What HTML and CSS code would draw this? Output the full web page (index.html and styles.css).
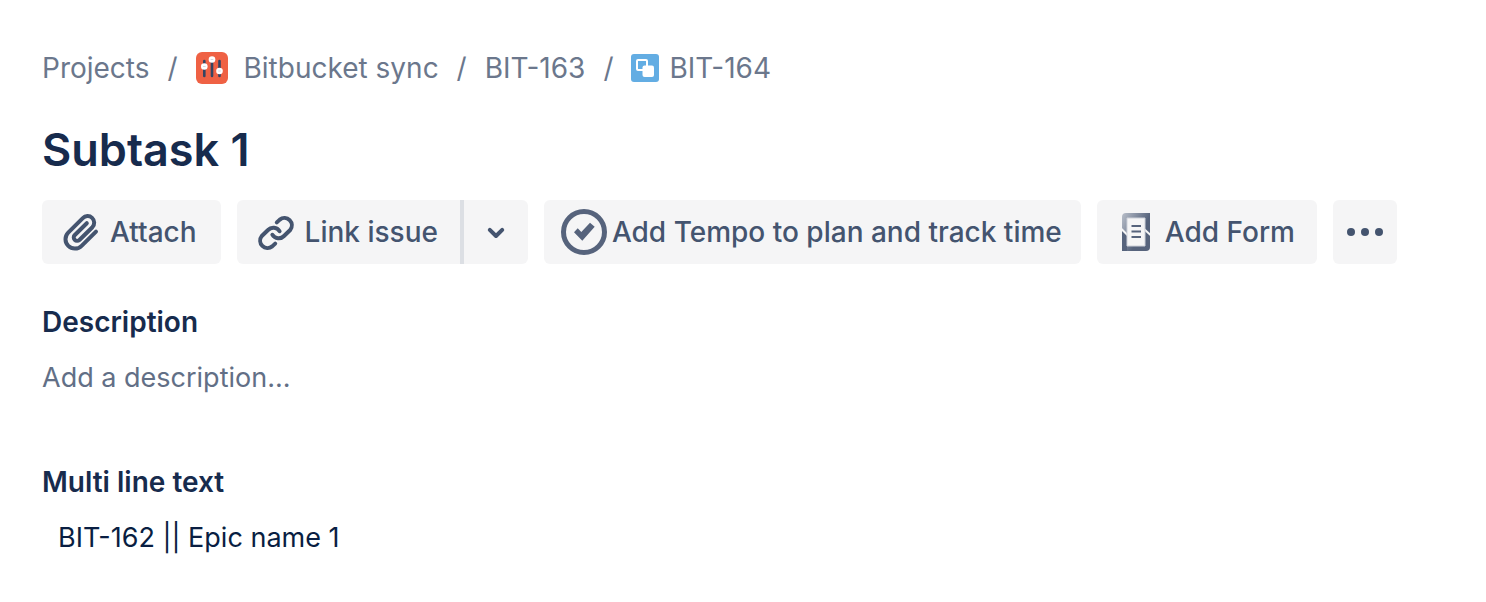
FILE: index.html
```html
<!DOCTYPE html>
<html lang="en">
<head>
<meta charset="utf-8">
<meta name="viewport" content="width=device-width, initial-scale=1">
<title>BIT-164 Subtask 1</title>
<link rel="stylesheet" href="styles.css">
</head>
<body>
<main class="issue">
  <nav aria-label="Breadcrumbs">
    <ol class="crumbs">
      <li class="crumb"><a href="#">Projects</a></li>
      <li class="crumb"><a class="crumb-project" href="#">
        <svg width="32" height="32" viewBox="0 0 32 32" aria-hidden="true">
          <rect width="32" height="32" rx="6" fill="#ef6144"/>
          <g stroke="#344563" stroke-width="2.600" stroke-linecap="round"><path d="M8.300 9v15M16 8v16M23.500 9v15"/></g>
          <g fill="#fff"><circle cx="8.300" cy="14.500" r="3.300"/><circle cx="16" cy="7.500" r="3.300"/><circle cx="23.500" cy="19" r="3.300"/></g>
          <path d="M7 14.500h2.600M14.700 7.500h2.600M22.200 19h2.600" stroke="#d5d9e0"/>
        </svg>
        Bitbucket sync</a></li>
      <li class="crumb"><a href="#">BIT-163</a></li>
      <li class="crumb"><a class="crumb-issue" href="#">
        <svg width="28" height="28" viewBox="0 0 28 28" aria-hidden="true">
          <rect width="28" height="28" rx="3" fill="#63ade3"/>
          <rect x="6" y="6" width="10" height="10" rx="1" fill="none" stroke="#fff" stroke-width="2"/>
          <rect x="11.500" y="11.500" width="11.500" height="11.500" rx="2" fill="#fff"/>
        </svg>
        BIT-164</a></li>
    </ol>
  </nav>

  <h1 class="title">Subtask 1</h1>

  <div class="toolbar">
    <button class="btn" type="button">
      <svg class="icon line" viewBox="0 0 24 24" aria-hidden="true"><path d="M19.500 11.800L12.300 18.900A4.700 4.700 0 0 1 5.600 12.300L12.900 5.100A3.200 3.200 0 0 1 17.700 9.600L11.200 16A1.700 1.700 0 0 1 8.800 13.600L14.900 7.600"/></svg>
      Attach
    </button>
    <div class="split">
      <button class="btn split-main" type="button">
        <svg class="icon line" viewBox="0 0 24 24" aria-hidden="true"><path d="M12.400 7.200L13.900 5.800A3.700 3.700 0 0 1 19.100 11L16 14A3.700 3.700 0 0 1 10.200 13.400M11.600 17.800L10.100 19.200A3.700 3.700 0 0 1 4.900 14L8 11A3.700 3.700 0 0 1 13.800 11.600"/></svg>
        Link issue
      </button>
      <button class="btn square" type="button" aria-label="More link options">
        <svg class="icon line" viewBox="0 0 24 24" aria-hidden="true"><path d="M8.900 10.900L12 14L15.100 10.900"/></svg>
      </button>
    </div>
    <button class="btn tempo" type="button">
      <svg class="icon" viewBox="0 0 48 48" aria-hidden="true"><circle cx="24" cy="24" r="20.500" fill="none" stroke="#56637c" stroke-width="5"/><path d="M14 24.300L17.700 20.300L21.300 24L30 14.700L34.700 18.700L22.300 32.700Z" fill="#56637c"/></svg>
      Add Tempo to plan and track time
    </button>
    <button class="btn form" type="button">
      <svg class="icon" viewBox="0 0 48 48" aria-hidden="true">
        <defs><linearGradient id="fade" x1="0" y1="0" x2="0.700" y2="0.500"><stop offset="0" stop-color="#b9bfca"/><stop offset="1" stop-color="#56637c"/></linearGradient></defs>
        <path d="M14 5H38V39Q38 43 34 43H10V9Q10 5 14 5Z" fill="url(#fade)"/>
        <path d="M10 23L15 28V43H10Z" fill="#56637c"/>
        <path d="M9.500 21L15.500 27M32 21L38.500 27" stroke="#f5f5f6" stroke-width="2"/>
        <path d="M15 10H33V38H15Z" fill="#f5f5f6" stroke="#cdd1d9"/>
        <path d="M19.500 18H29M19.500 23.500H29M19.500 29H29" stroke="#56637c" stroke-width="2"/>
      </svg>
      Add Form
    </button>
    <button class="btn square" type="button" aria-label="More actions">
      <svg class="icon" viewBox="0 0 48 48" aria-hidden="true"><g fill="#44546f"><circle cx="10" cy="24" r="4"/><circle cx="24" cy="24" r="4"/><circle cx="38" cy="24" r="4"/></g></svg>
    </button>
  </div>

  <section class="field">
    <h2 class="label">Description</h2>
    <p class="value placeholder">Add a description...</p>
  </section>
  <section class="field">
    <h2 class="label">Multi line text</h2>
    <p class="value inset">BIT-162 || Epic name 1</p>
  </section>
</main>
</body>
</html>
```
FILE: styles.css
```css
* { box-sizing: border-box; }

body {
  margin: 0;
  background: #fff;
  color: #172b4d;
  font-family: Inter, "Liberation Sans", sans-serif;
  font-size: 28px;
  line-height: 40px;
}

.issue { padding: 48px 42px; }

.crumbs {
  display: flex;
  flex-wrap: wrap;
  margin: 0;
  padding: 0;
  list-style: none;
  color: #6b778c;
}

.crumb { display: flex; }
.crumb + .crumb::before {
  content: "/";
  width: 46px;
  text-align: center;
}
.crumb a {
  display: flex;
  align-items: center;
  color: inherit;
  text-decoration: none;
}
.crumb-project { gap: 16px; }
.crumb-issue { gap: 10px; }

.title {
  margin: 32px 0 20px;
  font-size: 45px;
  font-weight: 600;
  line-height: 60px;
}

.toolbar {
  display: flex;
  flex-wrap: wrap;
  gap: 16px;
}

.btn {
  display: flex;
  align-items: center;
  justify-content: center;
  gap: 5px;
  height: 64px;
  padding: 0 24px 0 15px;
  border: 0;
  border-radius: 6px;
  background: #f5f5f6;
  color: #44546f;
  font: inherit;
  font-weight: 500;
  white-space: nowrap;
}

.tempo {
  gap: 4px;
  padding: 0 19px 0 16px;
}
.form { padding-right: 22px; }
.split { display: flex; }
.split-main {
  padding-right: 22px;
  border-right: 4px solid #dcdfe4;
  border-radius: 6px 0 0 6px;
}
.split .square { border-radius: 0 6px 6px 0; }
.btn.square { width: 64px; padding: 0; }

.icon { flex: none; width: 48px; height: 48px; }
.line {
  fill: none;
  stroke: #44546f;
  stroke-width: 2;
  stroke-linecap: round;
  stroke-linejoin: round;
}

.field { margin-top: 38px; }
.field + .field { margin-top: 64px; }
.label {
  margin: 0;
  font-size: 28px;
  font-weight: 600;
  line-height: 40px;
}
.value {
  margin: 16px 0 0;
  font-size: 27px;
}
.placeholder { color: #626f86; }
.inset { padding-left: 16px; color: #091e42; }
```
